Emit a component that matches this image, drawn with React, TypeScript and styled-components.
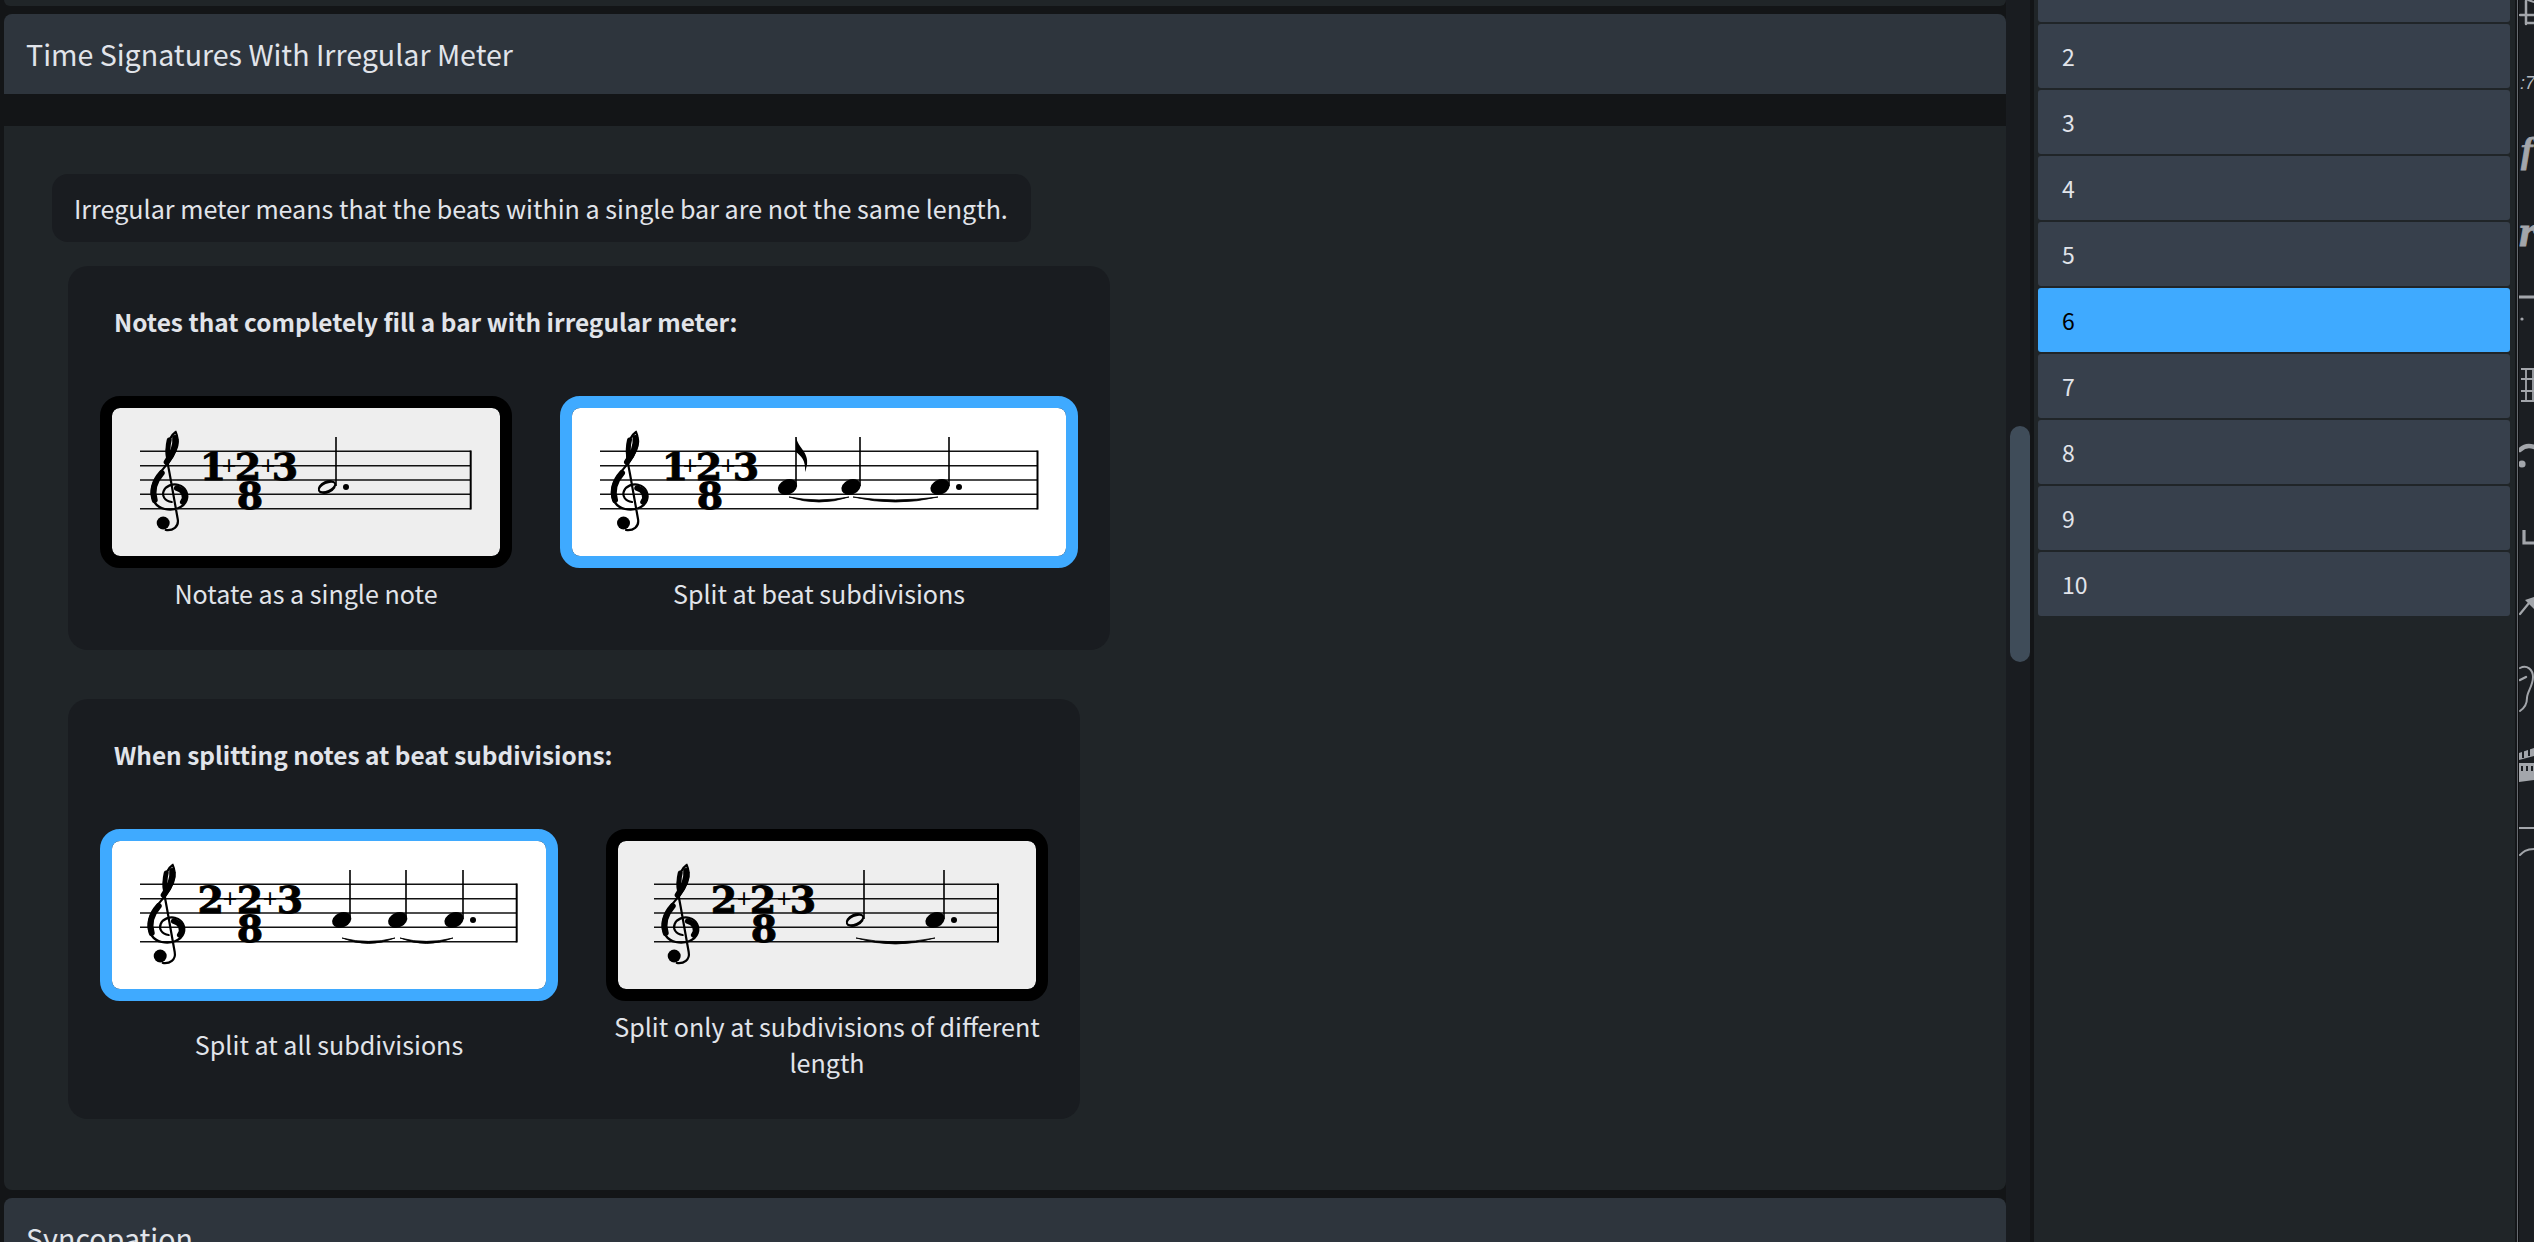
import styled, { createGlobalStyle } from "styled-components";

const GlobalStyle = createGlobalStyle`
  html, body {
    margin: 0;
    padding: 0;
    background: #131517;
    overflow: hidden;
  }
  * { box-sizing: border-box; }
`;

const Page = styled.div`
  display: flex;
  width: 2534px;
  height: 1242px;
  overflow: hidden;
  background: #131517;
  color: #e1e4ea;
  font-family: "Noto Sans CJK SC", "Noto Sans", sans-serif;
  font-size: 25.1px;
  line-height: 36px;
`;

const Main = styled.div`
  width: 2006px;
  flex: none;
  padding-left: 4px;
  overflow: hidden;
`;

const PrevSection = styled.div`
  height: 6px;
  background: #202528;
  border-radius: 0 0 8px 8px;
  margin-bottom: 8px;
`;

const SectionHeader = styled.div<{ $open?: boolean }>`
  height: 80px;
  display: flex;
  align-items: center;
  padding-left: 22px;
  background: #2e353d;
  font-size: 28.6px;
  border-radius: ${({ $open }) => ($open ? "8px 8px 0 0" : "8px")};
`;

const SectionBody = styled.div`
  margin-top: 32px;
  height: 1064px;
  padding: 48px 0 0 48px;
  background: #202528;
  border-radius: 0 0 8px 8px;
  margin-bottom: 8px;
`;

const Intro = styled.div`
  width: 979px;
  height: 68px;
  display: flex;
  align-items: center;
  padding-left: 22px;
  background: #191c20;
  border-radius: 16px;
  margin-bottom: 24px;
`;

const OptionCard = styled.div<{ $width: number }>`
  width: ${({ $width }) => $width}px;
  margin: 0 0 49px 16px;
  padding: 38px 32px 39px;
  background: #191c20;
  border-radius: 20px;
`;

const CardTitle = styled.div`
  font-weight: 700;
  font-size: 24.4px;
  margin: 0 0 56px 14px;
`;

const Options = styled.div`
  display: flex;
  gap: 48px;
`;

const Option = styled.div<{ $width: number }>`
  width: ${({ $width }) => $width}px;
  display: flex;
  flex-direction: column;
`;

const Picture = styled.div<{ $selected?: boolean }>`
  height: 172px;
  border: 12px solid ${({ $selected }) => ($selected ? "#3faaff" : "#000")};
  border-radius: 20px;
  background: ${({ $selected }) => ($selected ? "#fff" : "#eee")};
  background-clip: padding-box;
  svg { display: block; }
`;

const Caption = styled.div`
  flex: 1;
  display: flex;
  align-items: center;
  justify-content: center;
  text-align: center;
  margin-top: 7px;
  min-height: 36px;
`;

const ScrollTrack = styled.div`
  width: 28px;
  flex: none;
  padding: 426px 4px 0;
  background: #191c20;
  border-right: 4px solid #131517;
`;

const ScrollThumb = styled.div`
  width: 20px;
  height: 236px;
  border-radius: 10px;
  background: #3f4c59;
`;

const Panel = styled.div`
  width: 481px;
  flex: none;
  padding: 0 5px 0 4px;
  background: #202528;
  display: flex;
  flex-direction: column;
  gap: 2px;
`;

const BarRow = styled.div<{ $selected?: boolean; $cut?: boolean }>`
  height: ${({ $cut }) => ($cut ? 22 : 64)}px;
  flex: none;
  display: flex;
  align-items: center;
  padding-left: 24px;
  font-size: 23px;
  border-radius: ${({ $cut }) => ($cut ? "0 0 3px 3px" : "3px")};
  background: ${({ $selected }) => ($selected ? "#3faaff" : "#37404c")};
  color: ${({ $selected }) => ($selected ? "#000" : "#e1e4ea")};
`;

const Divider = styled.div`
  width: 4px;
  flex: none;
  background: #666a70;
  border-left: 2px solid #15171a;
  border-right: 1px solid #0e0f11;
`;

const PaletteStrip = styled.div`
  flex: 1;
  background: #1b1e22;
  overflow: hidden;
  svg { display: block; }
`;

type Head = { x: number; stem: number; hollow?: boolean; dot?: boolean; flag?: boolean };
type Tie = { from: number; to: number; y: number; low: number };

type ScoreProps = {
  width: number;
  staff: [number, number];
  clef: number;
  top: [string, number][];
  eight: number;
  notes: Head[];
  ties: Tie[];
};

const STAFF_Y = [43.3, 57.7, 72, 86.3, 100.7];

const Clef = ({ x }: { x: number }) => (
  <g transform={`translate(${x} 24)`} fill="none" stroke="#000" strokeLinecap="round">
    <path
      strokeWidth="2.2"
      d="M21 70C14 69 11 64 13 59C15 54 22 51 28 53C35 55 38 62 36 68C33 76 23 79 14 77C5 75 0 67 1 59C2 47 12 38 18 30C24 22 28 15 27 8C26.5 3 25 0 25 0C22 2 17 8 16 18C15.5 24 17 32 19 42L27 87C28.5 95 22 99 15 98"
    />
    <path strokeWidth="6" d="M4 68C1.5 60 3 50 11 41" />
    <path strokeWidth="6" d="M24.5 6C25.5 14 22 22 16 30" />
    <path strokeWidth="5" d="M18.5 8C17 14 17 20 18 26" />
    <path strokeWidth="5.5" d="M26 56C33 58 36 64 32 70" />
    <circle cx="12.5" cy="91" r="6.5" fill="#000" stroke="none" />
  </g>
);

const TimeSig = ({ top, eight }: { top: [string, number][]; eight: number }) => (
  <g fontFamily="'DejaVu Serif', serif" fontWeight="700" fontSize="38" textAnchor="middle" fill="#000" stroke="#000" strokeWidth="0.8">
    {top.map(([glyph, x], i) =>
      glyph === "+" ? (
        <text key={i} x={x} y="66" fontFamily="'Liberation Sans', sans-serif" fontWeight="400" fontSize="25" strokeWidth="0">
          +
        </text>
      ) : (
        <text key={i} x={x} y="71.5">
          {glyph}
        </text>
      ),
    )}
    <text x={eight} y="100.5">
      8
    </text>
  </g>
);

const Score = ({ width, staff, clef, top, eight, notes, ties }: ScoreProps) => (
  <svg width={width} height="148" viewBox={`0 0 ${width} 148`}>
    {STAFF_Y.map((y) => (
      <line key={y} x1={staff[0]} x2={staff[1]} y1={y} y2={y} stroke="#111" strokeWidth="1.6" />
    ))}
    <line x1={staff[1]} x2={staff[1]} y1="42.5" y2="101.5" stroke="#000" strokeWidth="2" />
    <Clef x={clef} />
    <TimeSig top={top} eight={eight} />
    {notes.map((n) => (
      <g key={n.x}>
        <line x1={n.stem} x2={n.stem} y1="29" y2="78" stroke="#000" strokeWidth="1.6" />
        {n.hollow ? (
          <g transform={`rotate(-24 ${n.x} 79)`}>
            <ellipse cx={n.x} cy="79" rx="9.8" ry="6.2" fill="#000" />
            <ellipse cx={n.x} cy="79" rx="7.8" ry="3.2" fill="#eee" />
          </g>
        ) : (
          <ellipse cx={n.x} cy="79" rx="10" ry="7.4" transform={`rotate(-24 ${n.x} 79)`} fill="#000" />
        )}
        {n.dot && <circle cx={n.stem + 10} cy="79" r="3" fill="#000" />}
        {n.flag && (
          <path
            d={`M${n.stem} 29C${n.stem + 2} 40 ${n.stem + 13} 44 ${n.stem + 11} 57C${n.stem + 10} 60 ${n.stem + 10} 62 ${n.stem + 9} 64C${n.stem + 10} 52 ${n.stem + 5} 48 ${n.stem} 44Z`}
            fill="#000"
          />
        )}
      </g>
    ))}
    {ties.map((t) => (
      <path
        key={t.from}
        d={`M${t.from} ${t.y}Q${(t.from + t.to) / 2} ${t.low + 5} ${t.to} ${t.y}Q${(t.from + t.to) / 2} ${t.low + 0.8} ${t.from} ${t.y}Z`}
        fill="#000"
        stroke="#000"
        strokeWidth="0.8"
      />
    ))}
  </svg>
);

// the palette icons are cut off by the window edge, only their left slivers show
const PaletteIcons = () => (
  <svg width="15" height="1242" viewBox="0 0 15 1242" fill="none" stroke="#a3a6ab" strokeLinecap="round">
    <path d="M7 1V24M1 15H15M7 23H15" strokeWidth="2.5" />
    <path d="M9 0L15 2" strokeWidth="2" />
    <text x="1" y="89" fill="#b4b8be" stroke="none" fontFamily="'Liberation Sans', sans-serif" fontSize="18" fontStyle="italic">
      :72
    </text>
    <text x="2" y="162" fill="#a3a6ab" stroke="#a3a6ab" strokeWidth="0.8" fontFamily="'Liberation Serif', serif" fontWeight="700" fontStyle="italic" fontSize="36">
      f
    </text>
    <text x="0" y="246" fill="#a3a6ab" stroke="#a3a6ab" strokeWidth="0.8" fontFamily="'Liberation Serif', serif" fontWeight="700" fontStyle="italic" fontSize="44">
      r
    </text>
    <path d="M0 297H15" strokeWidth="3" />
    <circle cx="3" cy="319" r="1.6" fill="#a3a6ab" stroke="none" />
    <path d="M2 369H15M2 379H15M2 391H15M2 401H15M7 368V402M14 368V402" strokeWidth="1.8" strokeLinecap="butt" />
    <path d="M1 450C5 446 10 445 15 447" strokeWidth="4.5" />
    <circle cx="3" cy="464" r="3.6" fill="#a3a6ab" stroke="none" />
    <path d="M5 530V543H15" strokeWidth="3.2" strokeLinecap="butt" />
    <path d="M1 614L10 603" strokeWidth="2.2" />
    <path d="M6 600L15 597V609Z" fill="#a3a6ab" stroke="none" />
    <path d="M1 668C8 664 14 670 14 677C14 686 8 692 8 698C8 705 4 709 1 711" strokeWidth="2" />
    <path d="M1 680L7 677" strokeWidth="2.4" />
    <path d="M0 753L15 748V756L0 760Z" fill="#a3a6ab" stroke="none" />
    <path d="M0 763H15V780L0 782Z" fill="#a3a6ab" stroke="none" />
    <path d="M4 751V758M10 749V756M3 766V771M8 766V771M13 766V771" stroke="#1b1e22" strokeWidth="2" strokeLinecap="butt" />
    <path d="M0 828H15" strokeWidth="2" />
    <path d="M1 855C4 852 7 849 15 849" strokeWidth="2" />
  </svg>
);

const bars = ["2", "3", "4", "5", "6", "7", "8", "9", "10"];

export default function App() {
  return (
    <Page>
      <GlobalStyle />
      <Main>
        <PrevSection />
        <SectionHeader $open>Time Signatures With Irregular Meter</SectionHeader>
        <SectionBody>
          <Intro>Irregular meter means that the beats within a single bar are not the same length.</Intro>

          <OptionCard $width={1042}>
            <CardTitle>Notes that completely fill a bar with irregular meter:</CardTitle>
            <Options>
              <Option $width={412}>
                <Picture>
                  <Score
                    width={388}
                    staff={[28, 358.7]}
                    clef={38.7}
                    top={[["1", 101], ["+", 117], ["2", 136], ["+", 156], ["3", 173]]}
                    eight={138}
                    notes={[{ x: 215, stem: 224, hollow: true, dot: true }]}
                    ties={[]}
                  />
                </Picture>
                <Caption>Notate as a single note</Caption>
              </Option>
              <Option $width={518}>
                <Picture $selected>
                  <Score
                    width={494}
                    staff={[28, 465.5]}
                    clef={39}
                    top={[["1", 103], ["+", 118], ["2", 137], ["+", 156], ["3", 174]]}
                    eight={138}
                    notes={[
                      { x: 215.5, stem: 224, flag: true },
                      { x: 279, stem: 288 },
                      { x: 368, stem: 377, dot: true },
                    ]}
                    ties={[
                      { from: 217, to: 277, y: 89, low: 94 },
                      { from: 281, to: 366, y: 89, low: 94 },
                    ]}
                  />
                </Picture>
                <Caption>Split at beat subdivisions</Caption>
              </Option>
            </Options>
          </OptionCard>

          <OptionCard $width={1012}>
            <CardTitle>When splitting notes at beat subdivisions:</CardTitle>
            <Options>
              <Option $width={458}>
                <Picture $selected>
                  <Score
                    width={434}
                    staff={[28, 404.7]}
                    clef={35.7}
                    top={[["2", 98.7], ["+", 118], ["2", 138], ["+", 158], ["3", 178]]}
                    eight={138}
                    notes={[
                      { x: 229.7, stem: 238 },
                      { x: 285.7, stem: 294 },
                      { x: 342, stem: 351, dot: true },
                    ]}
                    ties={[
                      { from: 230, to: 283, y: 97, low: 103 },
                      { from: 288, to: 341, y: 97, low: 103 },
                    ]}
                  />
                </Picture>
                <Caption>Split at all subdivisions</Caption>
              </Option>
              <Option $width={442}>
                <Picture>
                  <Score
                    width={418}
                    staff={[36, 380]}
                    clef={43.7}
                    top={[["2", 106], ["+", 126], ["2", 145], ["+", 166], ["3", 185]]}
                    eight={146}
                    notes={[
                      { x: 237, stem: 246, hollow: true },
                      { x: 317, stem: 326, dot: true },
                    ]}
                    ties={[{ from: 238, to: 317, y: 97, low: 104 }]}
                  />
                </Picture>
                <Caption>Split only at subdivisions of different length</Caption>
              </Option>
            </Options>
          </OptionCard>
        </SectionBody>
        <SectionHeader $open>Syncopation</SectionHeader>
      </Main>

      <ScrollTrack>
        <ScrollThumb />
      </ScrollTrack>

      <Panel>
        <BarRow $cut />
        {bars.map((bar) => (
          <BarRow key={bar} $selected={bar === "6"}>
            {bar}
          </BarRow>
        ))}
      </Panel>

      <Divider />

      <PaletteStrip>
        <PaletteIcons />
      </PaletteStrip>
    </Page>
  );
}
